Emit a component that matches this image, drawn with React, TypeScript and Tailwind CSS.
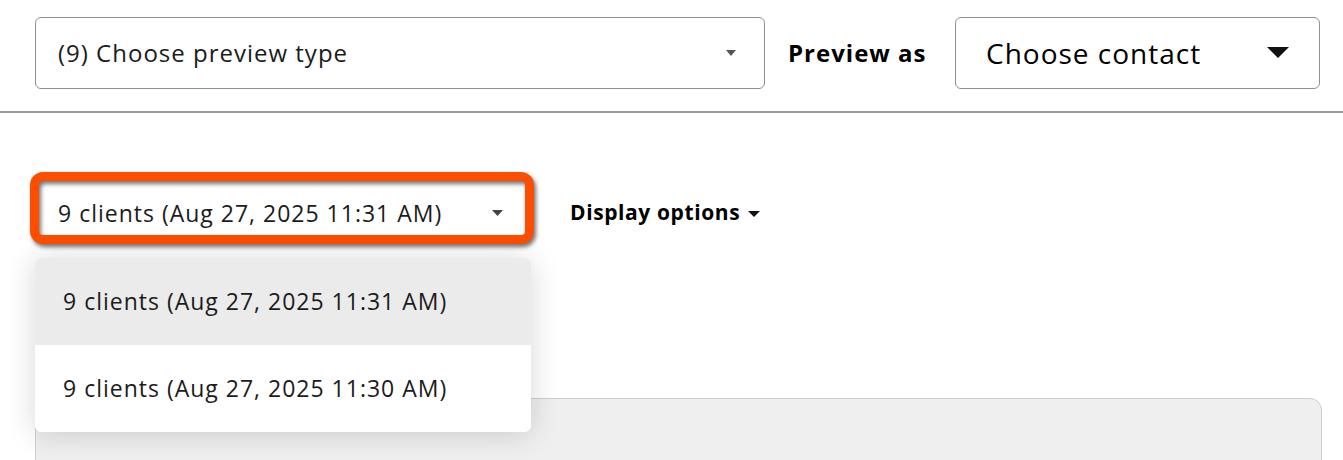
import React from "react";

const font = { fontFamily: '"Open Sans", "Noto Sans", sans-serif' };

function Caret({ w, h, color }: { w: number; h: number; color: string }) {
  return (
    <svg width={w} height={h} viewBox={`0 0 ${w} ${h}`}>
      <polygon points={`0,0 ${w},0 ${w / 2},${h}`} fill={color} />
    </svg>
  );
}

export default function App() {
  return (
    <div className="w-[1343px] h-[460px] overflow-hidden bg-white text-[#1b1b1b]" style={font}>
      {/* Top bar */}
      <div className="flex items-center h-[113px] pl-[35px] pb-[6px] border-b-2 border-[#9a9a9a]">
        <div className="flex items-center justify-between w-[730px] h-[72px] border border-[#8f8f8f] rounded-[6px] pl-[22px] pr-[28px]">
          <span className="text-[24px] tracking-[1px]">(9) Choose preview type</span>
          <Caret w={10} h={6} color="#555" />
        </div>
        <span className="ml-[23px] w-[137px] whitespace-nowrap text-[24px] tracking-[1px] font-bold text-black">Preview as</span>
        <div className="ml-[30px] flex items-center justify-between w-[365px] h-[72px] border border-[#8f8f8f] rounded-[6px] pl-[30px] pr-[30px]">
          <span className="text-[28px] tracking-[1px] text-black">Choose contact</span>
          <Caret w={22} h={11} color="#111" />
        </div>
      </div>

      {/* Section 2 */}
      <div className="relative pl-[35px] pr-[21px] pt-[55px]">
        <div className="flex items-center h-[90px]">
          <div className="relative flex items-center justify-between w-[496px] h-[60px] pl-[23px] pr-[28px] bg-white">
            <span className="text-[23px] tracking-[1px]">9 clients (Aug 27, 2025 11:31 AM)</span>
            <Caret w={11} h={6} color="#444" />
            <div className="absolute left-[-5px] top-[-11px] w-[504px] h-[72px] border-[9px] border-[#ff4d00] rounded-[13px] drop-shadow-[2px_3px_2px_rgba(0,0,0,0.55)]" />
          </div>
          <span className="ml-[39px] text-[21px] tracking-[0.6px] font-bold text-black">Display options</span>
          <span className="ml-[8px] mt-[1px]">
            <Caret w={12} h={6} color="#111" />
          </span>
        </div>

        {/* Gray panel behind */}
        <div className="mt-[140px] h-[100px] bg-[#efefef] border border-[#cfcfcf] rounded-tr-[12px] rounded-tl-[4px]" />

        {/* Dropdown menu */}
        <div className="absolute left-[35px] top-[145px] w-[496px] rounded-[7px] bg-white overflow-hidden shadow-[0_2px_30px_rgba(0,0,0,0.16)]">
          <div className="h-[87px] flex items-center pl-[28px] bg-[#ebebeb] text-[23px] tracking-[1px]">9 clients (Aug 27, 2025 11:31 AM)</div>
          <div className="h-[87px] flex items-center pl-[28px] bg-white text-[23px] tracking-[1px]">9 clients (Aug 27, 2025 11:30 AM)</div>
        </div>
      </div>
    </div>
  );
}
